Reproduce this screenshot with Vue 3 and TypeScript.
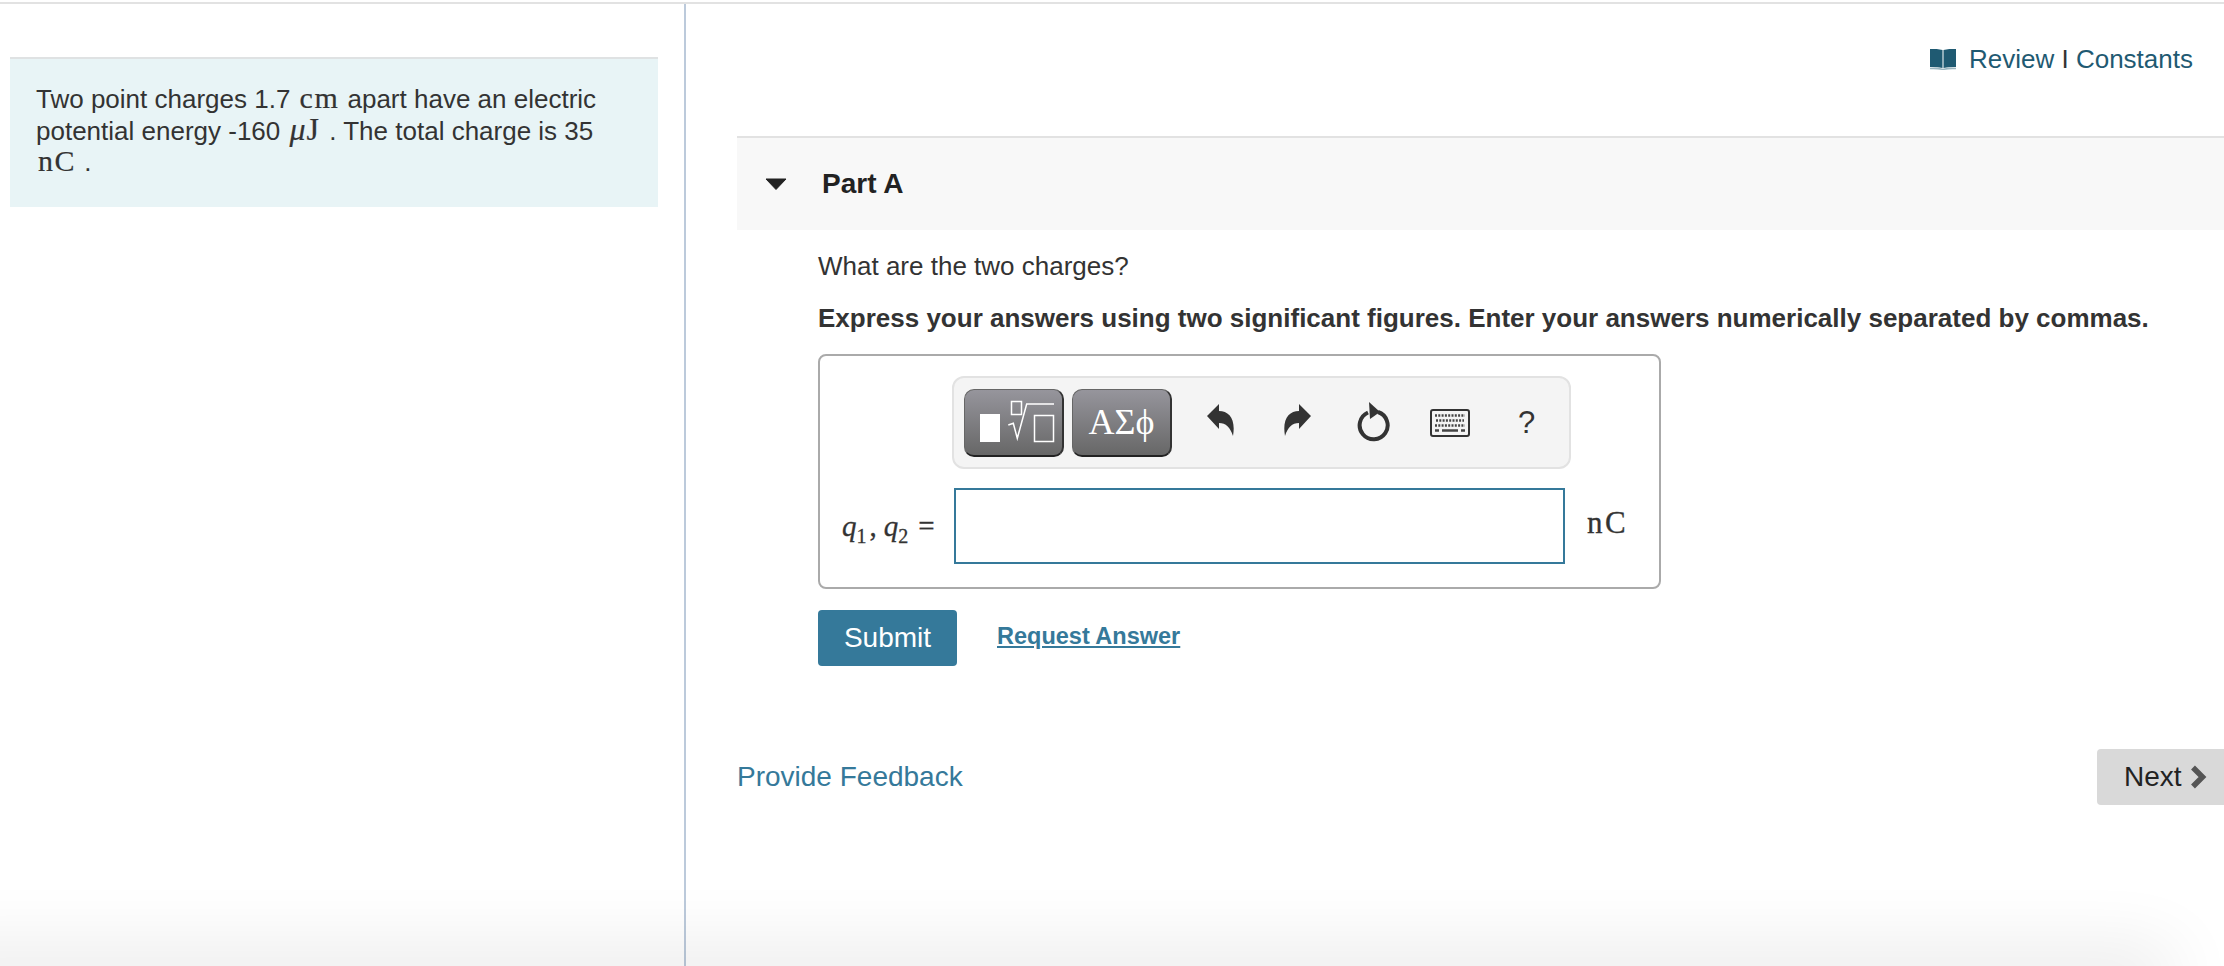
<script setup lang="ts">
const title: string = 'Part A'
</script>

<template>
  <div class="page">
    <div class="topbar"></div>
    <div class="cols">
      <aside class="left">
        <div class="intro">
          Two point charges 1.7 <span class="m">cm</span> apart have an electric potential energy -160 <span class="m mu"><i>μ</i>J</span> . The total charge is 35 <span class="m">nC</span> .
        </div>
      </aside>
      <main class="right">
        <div class="tools">
          <svg class="book" viewBox="0 0 26 21" width="26" height="21"><path d="M0 0q7-.5 12.500 1v18q-6-1.500-12.500-1zM26 0q-7-.5-12.500 1v18q6-1.500 12.500-1z" fill="#1f5a72"/><path d="M0 19.500q7-.5 13 1q6-1.500 13-1" fill="none" stroke="#1f5a72" stroke-opacity=".45" stroke-width="1.500"/></svg>
          <span class="tl">Review <span class="sep">I</span> Constants</span>
        </div>
        <div class="parthead">
          <svg class="caret" viewBox="0 0 22 12" width="22" height="12"><path d="M1 1h20L11 11.500z" fill="#222" stroke="#222" stroke-linejoin="round"/></svg>
          <span class="ptitle">{{ title }}</span>
        </div>
        <section class="body">
          <p class="q">What are the two charges?</p>
          <p class="inst">Express your answers using two significant figures. Enter your answers numerically separated by commas.</p>
          <div class="answer">
            <div class="toolbar">
              <button class="tbtn first">
                <svg viewBox="0 0 100 68" width="100" height="68">
                  <rect x="16" y="26" width="20" height="28" fill="#fff"/>
                  <rect x="47.500" y="13.500" width="10" height="13" fill="none" stroke="#fff" stroke-width="1.500"/>
                  <path d="M44.300 37l5-1.700 4 15L62.700 16H90" fill="none" stroke="#fff" stroke-width="1.500"/>
                  <rect x="70.500" y="27.500" width="19" height="26" fill="none" stroke="#fff" stroke-width="1.500"/>
                </svg>
              </button>
              <button class="tbtn second">ΑΣϕ</button>
              <svg class="ic undo" viewBox="0 0 28 40" width="28" height="40"><path d="M0 13L12 1v7c10 0 17 8 14 25-3-9-7-13-14-13v6z" fill="#333"/></svg>
              <svg class="ic redo" viewBox="0 0 28 40" width="28" height="40"><path d="M28 13L16 1v7C6 8-1 16 2 33c3-9 7-13 14-13v6z" fill="#333"/></svg>
              <svg class="ic reset" viewBox="0 0 34 44" width="34" height="44"><path d="M22 11a14 14 0 1 1-10 .5" fill="none" stroke="#333" stroke-width="4"/><path d="M13 1l11 10-10 7z" fill="#333"/></svg>
              <svg class="ic kbd" viewBox="0 0 40 28" width="40" height="28">
                <rect x="1" y="1" width="38" height="26" rx="2" fill="#f4f4f4" stroke="#333" stroke-width="2"/>
                <path d="M5 6.500h30M6 11.500h28M5 16.500h30" stroke="#444" stroke-width="2.500" stroke-dasharray="2 1.300" fill="none"/>
                <path d="M5 21.500h4M12 21.500h16M31 21.500h4" stroke="#444" stroke-width="2.500" fill="none"/>
              </svg>
              <span class="help">?</span>
            </div>
            <div class="row">
              <label class="lab"><i>q</i><sub>1</sub><span class="comma">,</span><i>q</i><sub>2</sub><span class="eq">=</span></label>
              <input class="inp" type="text" />
              <span class="unit">nC</span>
            </div>
          </div>
          <div class="actions">
            <button class="submit">Submit</button>
            <a class="req">Request Answer</a>
          </div>
        </section>
        <div class="foot">
          <a class="fb">Provide Feedback</a>
          <button class="next">Next
            <svg viewBox="0 0 18 26" width="18" height="26"><path d="M4 3.500l9.500 9.500-9.500 9.500" fill="none" stroke="#555" stroke-width="5.500" stroke-linejoin="miter"/></svg>
          </button>
        </div>
      </main>
    </div>
    <div class="shade"></div>
  </div>
</template>

<style>
html, body { margin: 0; background: #fff; }
</style>

<style scoped>
.page { position: relative; height: 966px; overflow: hidden; padding-top: 2px; box-sizing: border-box; font-family: "Liberation Sans", Arial, sans-serif; color: #333; background: #fff; }
.topbar { height: 2px; background: #e2e2e2; }
.cols { display: flex; height: 962px; }
.left { width: 684px; flex: none; box-sizing: content-box; border-right: 2px solid #bccadb; padding-top: 53px; }
.intro { margin: 0 26px 0 10px; padding: 25px 34px 28px 26px; background: #e8f4f6; border-top: 2px solid #dfe2e3; font-size: 26px; line-height: 31.500px; }
.m { font-family: "Liberation Serif", serif; font-size: 30px; letter-spacing: 1.500px; line-height: 0; margin: 0 1px 0 2px; -webkit-text-stroke: .2px #333; }
.mu { font-size: 32px; letter-spacing: 1px; margin-right: 2px; }
.right { flex: 1; min-width: 0; padding-left: 51px; }
.tools { display: flex; justify-content: flex-end; align-items: center; height: 39px; margin-top: 36px; padding-right: 31px; font-size: 26px; color: #1f5a72; }
.book { margin-right: 13px; }
.sep { color: #333; }
.parthead { display: flex; align-items: center; height: 94px; margin-top: 57px; border-top: 2px solid #e2e2e2; background: #f8f8f8; box-sizing: border-box; }
.caret { margin-left: 28px; }
.ptitle { margin-left: 35px; font-size: 28px; font-weight: 700; color: #222; }
.body { padding-left: 81px; }
.q { margin: 20px 0 0; font-size: 26px; line-height: 32px; }
.inst { margin: 20px 0 0; font-size: 26px; line-height: 32px; font-weight: 700; white-space: nowrap; }
.answer { width: 843px; height: 235px; margin-top: 20px; box-sizing: border-box; border: 2px solid #aaa; border-radius: 8px; padding: 20px 0 0 0; }
.toolbar { display: flex; align-items: center; position: relative; width: 619px; height: 93px; margin-left: 132px; box-sizing: border-box; border: 2px solid #e2e2e2; border-radius: 12px; background: #f4f4f4; padding-left: 10px; }
.tbtn { width: 100px; height: 68px; padding: 0; margin: 0; box-sizing: border-box; border: 1px solid #666; border-bottom: 2px solid #222; border-right: 2px solid #333; border-radius: 10px; background: linear-gradient(#96959c, #676767); color: #fff; font-family: "Liberation Serif", serif; overflow: hidden; display: flex; align-items: center; justify-content: center; }
.tbtn svg { display: block; flex: none; }
.second { margin-left: 8px; font-size: 36px; }
.ic { flex: none; }
.undo { margin-left: 35px; }
.redo { margin-left: 48px; }
.reset { margin-left: 45px; }
.kbd { margin-left: 40px; }
.help { margin-left: 48px; font-size: 31px; color: #333; }
.row { display: flex; align-items: center; margin-top: 19px; height: 76px; }
.lab { width: 134px; box-sizing: border-box; padding-left: 22px; font-family: "Liberation Serif", serif; font-size: 29px; white-space: nowrap; color: #333; -webkit-text-stroke: .3px #333; }
.lab sub { font-size: 20px; line-height: 0; }
.comma { margin: 0 7px 0 3px; }
.eq { margin-left: 10px; }
.inp { width: 611px; height: 76px; box-sizing: border-box; border: 2px solid #35799a; outline: none; background: #fff; margin: 0; padding: 0; }
.unit { margin-left: 22px; font-family: "Liberation Serif", serif; font-size: 31px; letter-spacing: 2.500px; position: relative; top: -3px; -webkit-text-stroke: .3px #333; }
.actions { display: flex; align-items: center; margin-top: 21px; }
.submit { width: 139px; height: 56px; border: none; border-radius: 4px; background: #35799a; color: #fff; font: 28px "Liberation Sans", Arial, sans-serif; padding: 0; }
.req { margin-left: 40px; font-size: 23.500px; font-weight: 700; color: #35799a; text-decoration: underline; position: relative; top: -2px; }
.foot { display: flex; justify-content: space-between; align-items: center; margin-top: 83px; height: 56px; }
.fb { font-size: 28px; color: #35799a; }
.next { display: flex; align-items: center; width: 127px; height: 56px; box-sizing: border-box; border: none; border-radius: 4px 0 0 4px; background: #d9d9d9; color: #222; padding: 0 0 0 27px; font: 28px "Liberation Sans", Arial, sans-serif; }
.next svg { margin-left: 7px; }
.shade { position: absolute; left: -60px; right: 70px; bottom: -20px; height: 20px; box-shadow: 0 0 70px 18px rgba(0,0,0,.09); pointer-events: none; }
</style>
